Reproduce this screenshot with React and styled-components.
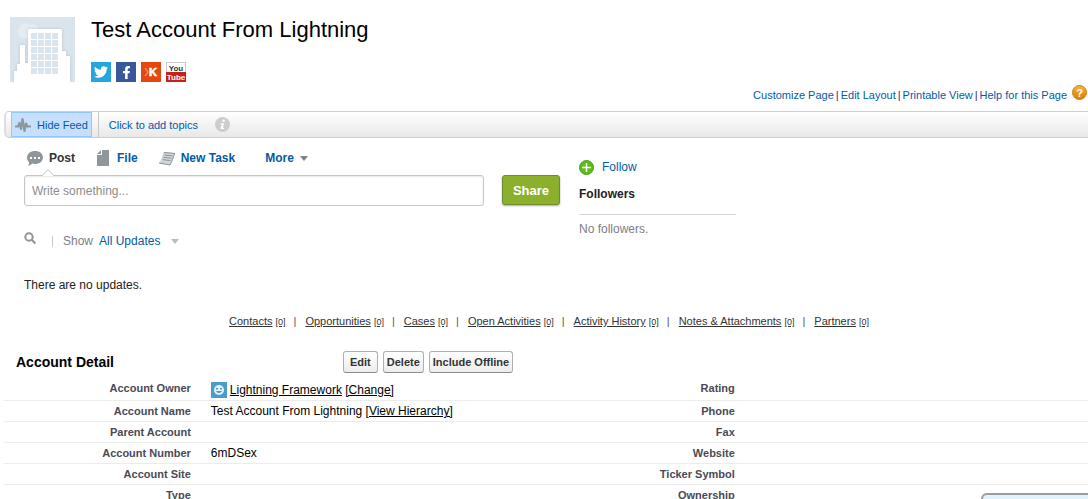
import React from 'react';
import styled, { createGlobalStyle } from 'styled-components';
import { FaTwitter, FaFacebookF } from 'react-icons/fa';

const GlobalStyle = createGlobalStyle`
  * { box-sizing: border-box; }
  body {
    margin: 0;
    background: #fff;
    color: #222;
    font-family: "Liberation Sans", Arial, Helvetica, sans-serif;
    font-size: 12px;
    line-height: 16px;
  }
  button, input { font-family: inherit; margin: 0; }
  svg { display: block; flex: none; }
  h1, h2, h3, p, ul { margin: 0; padding: 0; }
`;

const Page = styled.div`
  height: 100vh;
  overflow: hidden;
`;

const Header = styled.header`
  display: flex;
  gap: 16px;
  padding: 17px 10px 0;
`;

const Title = styled.h1`
  font-size: 22px;
  line-height: 26px;
  font-weight: normal;
  color: #000;
`;

const SocialRow = styled.div`
  display: flex;
  gap: 5px;
  margin-top: 19px;
`;

const SocialLink = styled.a`
  display: flex;
  align-items: center;
  justify-content: center;
  width: 20px;
  height: 20px;
  background: ${(p) => p.$bg};
  color: #fff;
`;

const PageLinks = styled.nav`
  display: flex;
  justify-content: flex-end;
  align-items: flex-end;
  gap: 2px;
  height: 18px;
  margin-top: 3px;
  margin-bottom: 8px;
  padding-right: 1px;
  font-size: 11px;
  color: #4a1a80;
`;

const Link = styled.a`
  color: #015ba7;
  text-decoration: none;
`;

const HelpLink = styled(Link)`
  display: flex;
  align-items: flex-end;
  gap: 5px;
  height: 18px;
  svg { align-self: flex-start; }
`;

const Bleed = styled.main`
  margin: 0 -4px 0 4px;
`;

const Toolbar = styled.div`
  display: flex;
  align-items: center;
  height: 27px;
  padding-left: 5px;
  border: 1px solid #cfcfcf;
  border-left: 2px solid #dedede;
  border-radius: 5px 0 0 5px;
  background: linear-gradient(#fff, #e8e8e8);
  font-size: 11px;
`;

const HideFeedButton = styled.button`
  display: flex;
  align-items: center;
  gap: 6px;
  height: 25px;
  padding: 0 3px;
  border: 1px solid #94c8fc;
  background: #c5dffc;
  color: #015ba7;
  font-size: 11px;
`;

const TopicsLink = styled(Link)`
  display: flex;
  align-items: center;
  height: 25px;
  margin: 0 17px 0 6px;
  padding-left: 10px;
  border-left: 1px solid #c8c8c8;
`;

const FeedArea = styled.section`
  display: flex;
  gap: 19px;
  padding: 10px 20px 0;
`;

const Feed = styled.div`
  width: 536px;
`;

const Tabs = styled.div`
  display: flex;
  align-items: center;
  height: 20px;
  padding-left: 3px;
  gap: 21px;
`;

const Tab = styled.button`
  display: flex;
  align-items: center;
  gap: ${(p) => p.$gap || 6}px;
  padding: 0;
  border: 0;
  background: none;
  font-size: 12px;
  font-weight: bold;
  color: ${(p) => (p.$active ? '#333' : '#015ba7')};
`;

const MoreTab = styled(Tab)`
  margin-left: 9px;
`;

const Composer = styled.form`
  display: flex;
  justify-content: space-between;
  margin-top: 7px;
`;

const PostField = styled.div`
  position: relative;
  width: 460px;
`;

const Notch = styled.svg`
  position: absolute;
  left: 17px;
  top: -7px;
`;

const PostInput = styled.input`
  display: block;
  width: 100%;
  height: 31px;
  padding: 0 7px;
  border: 1px solid #c4c6c8;
  border-radius: 3px;
  box-shadow: inset 0 1px 2px #e4e4e4;
  font-size: 12px;
  color: #333;
  &::placeholder { color: #8d8d8d; opacity: 1; }
`;

const ShareButton = styled.button`
  width: 58px;
  height: 30px;
  padding: 0;
  border: 1px solid #6f8c34;
  border-radius: 3px;
  background: #8ab02c;
  box-shadow: 0 1px 2px #aaa;
  color: #fff;
  font-size: 13px;
  font-weight: bold;
`;

const FilterRow = styled.div`
  display: flex;
  align-items: center;
  height: 20px;
  margin-top: 25px;
  color: #7d7d84;
`;

const SearchButton = styled.button`
  align-self: flex-start;
  padding: 1px 0 0;
  border: 0;
  background: none;
`;

const Divider = styled.span`
  width: 1px;
  height: 11px;
  margin: 0 10px 0 15px;
  background: #c9c9c9;
`;

const FilterButton = styled.button`
  display: flex;
  align-items: center;
  gap: 11px;
  margin-left: 6px;
  padding: 0;
  border: 0;
  background: none;
  color: #015ba7;
  font-size: 12px;
`;

const EmptyFeed = styled.p`
  margin-top: 26px;
`;

const Followers = styled.aside`
  width: 157px;
  padding-top: 10px;
`;

const FollowButton = styled.button`
  display: flex;
  align-items: center;
  gap: 8px;
  height: 18px;
  padding: 0;
  border: 0;
  background: none;
  color: #015ba7;
  font-size: 12px;
`;

const FollowersTitle = styled.h3`
  margin-top: 10px;
  padding-bottom: 12px;
  border-bottom: 1px solid #d4d4d4;
  font-size: 12px;
`;

const FollowersEmpty = styled.p`
  margin-top: 6px;
  color: #7d7d84;
`;

const RelatedLists = styled.nav`
  display: flex;
  justify-content: center;
  margin-top: 20px;
  padding-left: 2px;
  font-size: 11px;
`;

const RelatedItem = styled.span`
  & + &::before {
    content: "|";
    margin: 0 9px 0 8px;
    color: #555;
  }
`;

const RelatedLink = styled.a`
  color: #333;
`;

const Count = styled.span`
  font-size: 9px;
`;

const DetailHeader = styled.div`
  display: flex;
  align-items: center;
  height: 22px;
  margin-top: 21px;
  padding-left: 12px;
`;

const DetailTitle = styled.h2`
  width: 327px;
  font-size: 14px;
  color: #000;
`;

const ActionButtons = styled.div`
  display: flex;
  gap: 5px;
`;

const ActionButton = styled.button`
  height: 22px;
  padding: 0 ${(p) => p.$pad || 3}px;
  border: 1px solid #b0b0b0;
  border-bottom-color: #8c8c8c;
  border-radius: 3px;
  background: linear-gradient(#fff, #ededed);
  color: #333;
  font-size: 11px;
  font-weight: bold;
`;

const DetailTable = styled.table`
  width: 100%;
  margin-top: 5px;
  border-collapse: collapse;
  table-layout: fixed;
`;

const Row = styled.tr`
  height: 21px;
  border-bottom: 1px solid #ececec;
`;

const Label = styled.th`
  width: 18%;
  padding: 2px 9px 2px 0;
  vertical-align: top;
  text-align: right;
  font-size: 11px;
  line-height: 16px;
  color: #4a4a56;
`;

const Value = styled.td`
  width: 32%;
  padding: 2px 0 2px 11px;
  vertical-align: top;
  color: #000;
`;

const Owner = styled.span`
  display: flex;
  align-items: center;
  gap: 3px;
  height: 18px;
  padding-top: 2px;
`;

const ValueLink = styled.a`
  color: #000;
`;

const ChatDock = styled.aside`
  position: fixed;
  right: 0;
  bottom: 0;
  width: 107px;
  height: 6px;
  border: 2px solid #979ea3;
  border-width: 2px 0 0 2px;
  border-radius: 8px 0 0 0;
  background: #e1f2fd;
`;

const BuildingLogo = () => (
  <svg width="65" height="65" viewBox="0 0 65 65" role="img" aria-label="Account">
    <defs>
      <filter id="soft" x="-20%" y="-20%" width="140%" height="140%">
        <feDropShadow dx="0" dy="0" stdDeviation="1.5" floodColor="#8fa3b1" floodOpacity="0.5" />
      </filter>
    </defs>
    <rect width="65" height="65" fill="#d9e4ed" />
    <path d="M9 19c-3-3-2-7 1-8 0-5 7-6 9-3 4-2 8-1 9 3v9h-9c-3 2-7 2-10-1z" fill="#e4ecf2" />
    <path filter="url(#soft)" fill="#fff" d="M4 65V54h3v-7h3V28h5v18h3V14q0-2 2-2h30q2 0 2 2v20h4v5h4v26z" />
    {[0, 1, 2, 3, 4, 5].map((r) =>
      [0, 1, 2, 3].map((c) => (
        <rect key={`${r}${c}`} x={21 + c * 7} y={16 + r * 7} width="6" height="6" fill="#d9e4ed" />
      ))
    )}
  </svg>
);

const KloutLogo = () => (
  <svg width="20" height="20" viewBox="0 0 20 20">
    <path d="M4 6l3 4-3 4" fill="none" stroke="#f39a70" strokeWidth="1.2" />
    <text x="8" y="14" fontSize="11" fontWeight="bold" fill="#fff" stroke="#fff" strokeWidth=".6">K</text>
  </svg>
);

const YouTubeLogo = () => (
  <svg width="20" height="20" viewBox="0 0 20 20">
    <rect x=".5" y=".5" width="19" height="19" fill="#fff" stroke="#ccc" />
    <rect y="10" width="20" height="10" fill="#c4201d" />
    <text x="10" y="8.5" fontSize="8" fontWeight="bold" textAnchor="middle" fill="#333">You</text>
    <text x="10" y="18" fontSize="8" fontWeight="bold" textAnchor="middle" fill="#fff">Tube</text>
  </svg>
);

const HelpIcon = () => (
  <svg width="15" height="15" viewBox="0 0 15 15">
    <defs>
      <linearGradient id="help" x2="0" y2="1">
        <stop stopColor="#f6b73c" />
        <stop offset="1" stopColor="#d97a00" />
      </linearGradient>
    </defs>
    <circle cx="7.5" cy="7.5" r="7" fill="url(#help)" stroke="#c97f1a" />
    <text x="7.5" y="11.5" fontSize="11" fontWeight="bold" textAnchor="middle" fill="#fff">?</text>
  </svg>
);

const PulseIcon = () => (
  <svg width="16" height="16" viewBox="0 0 16 16">
    <path d="M0 9.500h3L4.500 6l1.500 6L7.500 2l2 12L11 6.500l1.500 3H16" fill="none" stroke="#8e979d" strokeWidth="2.200" strokeLinejoin="round" />
  </svg>
);

const InfoIcon = () => (
  <svg width="15" height="15" viewBox="0 0 15 15">
    <circle cx="7.5" cy="7.5" r="7.5" fill="#cbcdce" />
    <circle cx="8.600" cy="3.800" r="1.300" fill="#fff" />
    <path d="M6 6.300h3L8 10.800h1.200l-.3 1.200H5.500l1.200-4.500H5.700z" fill="#fff" />
  </svg>
);

const PostIcon = () => (
  <svg width="16" height="15" viewBox="0 0 16 15">
    <path d="M8 0c4.500 0 8 2.700 8 6.500S12.500 13 8 13c-1 0-2-.1-2.800-.4C4 14 2.500 14.700 1 14.800c.8-1 1.100-2.200 1-3.600C.7 10 0 8.400 0 6.500 0 2.700 3.500 0 8 0z" fill="#8e979b" />
    <path d="M3 6h2v2H3zM7 6h2v2H7zM11 6h2v2h-2z" fill="#fff" />
  </svg>
);

const FileIcon = () => (
  <svg width="13" height="16" viewBox="0 0 13 16">
    <path d="M6 0h7v16H1V5h5zM5 0v4H1z" fill="#8e979b" />
  </svg>
);

const TaskIcon = () => (
  <svg width="16" height="15" viewBox="0 0 16 15">
    <path d="M5 1l11 1c-2 3-2 8-5 12L0 12c3-3 3-8 5-11z" fill="#d3d6d8" />
    <path d="M5 1.500l11 1M5.500 4l8 1M4.500 6.300l8 1M3.500 8.600l8 1M0 12l11 2c2-3 3-8 5-12" fill="none" stroke="#8b9296" />
  </svg>
);

const Caret = ({ color }) => (
  <svg width="8" height="5" viewBox="0 0 8 5">
    <path d="M0 0h8L4 5z" fill={color} />
  </svg>
);

const SearchIcon = () => (
  <svg width="13" height="13" viewBox="0 0 13 13">
    <circle cx="5" cy="5" r="3.700" fill="none" stroke="#8e979b" strokeWidth="2" />
    <path d="M7.500 7.500l3.800 4" stroke="#8e979b" strokeWidth="2.200" />
  </svg>
);

const PlusIcon = () => (
  <svg width="15" height="15" viewBox="0 0 15 15">
    <circle cx="7.500" cy="7.500" r="7" fill="#5fbb1c" stroke="#4a9e18" />
    <path d="M7.500 3v9M3 7.500h9" stroke="#fff" strokeWidth="1.500" />
  </svg>
);

const OwnerIcon = () => (
  <svg width="16" height="16" viewBox="0 0 16 16">
    <rect width="16" height="16" fill="#4b9bcd" />
    <circle cx="8" cy="8" r="5" fill="#e3f2fb" />
    <path d="M5 6h2v1.500H5zM9 6h2v1.500H9zM5 9h6c-.5 2.600-5.500 2.600-6 0z" fill="#4b9bcd" />
  </svg>
);

const pageLinks = ['Customize Page', 'Edit Layout', 'Printable View'];

const relatedLists = [
  'Contacts',
  'Opportunities',
  'Cases',
  'Open Activities',
  'Activity History',
  'Notes & Attachments',
  'Partners',
];

const rows = [
  ['Account Owner', (
    <Owner>
      <OwnerIcon />
      <span>
        <ValueLink href="#owner">Lightning Framework</ValueLink>{' '}
        <ValueLink href="#change">[Change]</ValueLink>
      </span>
    </Owner>
  ), 'Rating'],
  ['Account Name', (
    <>Test Account From Lightning <ValueLink href="#hierarchy">[View Hierarchy]</ValueLink></>
  ), 'Phone'],
  ['Parent Account', '', 'Fax'],
  ['Account Number', '6mDSex', 'Website'],
  ['Account Site', '', 'Ticker Symbol'],
  ['Type', '', 'Ownership'],
];

export default function App() {
  return (
    <Page>
      <GlobalStyle />
      <Header>
        <BuildingLogo />
        <div>
          <Title>Test Account From Lightning</Title>
          <SocialRow>
            <SocialLink href="#twitter" $bg="#26a6de" aria-label="Twitter"><FaTwitter size={14} /></SocialLink>
            <SocialLink href="#facebook" $bg="#39579b" aria-label="Facebook"><FaFacebookF size={13} /></SocialLink>
            <SocialLink href="#klout" $bg="#e44711" aria-label="Klout"><KloutLogo /></SocialLink>
            <SocialLink href="#youtube" $bg="#fff" aria-label="YouTube"><YouTubeLogo /></SocialLink>
          </SocialRow>
        </div>
      </Header>

      <PageLinks>
        {pageLinks.map((t) => (
          <React.Fragment key={t}>
            <Link href="#page">{t}</Link>
            <span>|</span>
          </React.Fragment>
        ))}
        <HelpLink href="#help">Help for this Page <HelpIcon /></HelpLink>
      </PageLinks>

      <Bleed>
        <Toolbar>
          <HideFeedButton type="button"><PulseIcon /> Hide Feed</HideFeedButton>
          <TopicsLink href="#topics">Click to add topics</TopicsLink>
          <InfoIcon />
        </Toolbar>

        <FeedArea>
          <Feed>
            <Tabs>
              <Tab type="button" $active><PostIcon /> Post</Tab>
              <Tab type="button" $gap={8}><FileIcon /> File</Tab>
              <Tab type="button"><TaskIcon /> New Task</Tab>
              <MoreTab type="button">More <Caret color="#7d858a" /></MoreTab>
            </Tabs>
            <Composer onSubmit={(e) => e.preventDefault()}>
              <PostField>
                <PostInput type="text" aria-label="Post" placeholder="Write something..." />
                <Notch width="14" height="8" viewBox="0 0 14 8">
                  <path d="M1 8l6-6.500L13 8" fill="#fff" stroke="#c4c6c8" />
                </Notch>
              </PostField>
              <ShareButton type="submit">Share</ShareButton>
            </Composer>
            <FilterRow>
              <SearchButton type="button" aria-label="Search feed"><SearchIcon /></SearchButton>
              <Divider />
              Show
              <FilterButton type="button">All Updates <Caret color="#b9bcbe" /></FilterButton>
            </FilterRow>
            <EmptyFeed>There are no updates.</EmptyFeed>
          </Feed>
          <Followers>
            <FollowButton type="button"><PlusIcon /> Follow</FollowButton>
            <FollowersTitle>Followers</FollowersTitle>
            <FollowersEmpty>No followers.</FollowersEmpty>
          </Followers>
        </FeedArea>

        <RelatedLists>
          {relatedLists.map((t) => (
            <RelatedItem key={t}>
              <RelatedLink href="#related">{t}</RelatedLink>{' '}
              <RelatedLink href="#related"><Count>[0]</Count></RelatedLink>
            </RelatedItem>
          ))}
        </RelatedLists>

        <DetailHeader>
          <DetailTitle>Account Detail</DetailTitle>
          <ActionButtons>
            <ActionButton type="button" $pad={6}>Edit</ActionButton>
            <ActionButton type="button">Delete</ActionButton>
            <ActionButton type="button">Include Offline</ActionButton>
          </ActionButtons>
        </DetailHeader>

        <DetailTable>
          <tbody>
            {rows.map(([left, value, right]) => (
              <Row key={left}>
                <Label scope="row">{left}</Label>
                <Value>{value}</Value>
                <Label scope="row">{right}</Label>
                <Value />
              </Row>
            ))}
          </tbody>
        </DetailTable>
      </Bleed>
      <ChatDock aria-label="Chat" />
    </Page>
  );
}
